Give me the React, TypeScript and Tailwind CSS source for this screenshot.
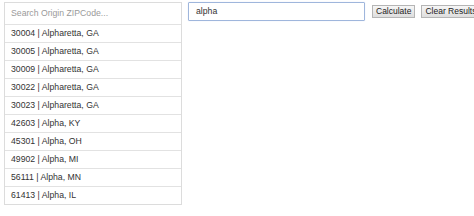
// Zip code lookup panel
// Search list on the left, query input and buttons on the right

const results = [
  '30004 | Alpharetta, GA',
  '30005 | Alpharetta, GA',
  '30009 | Alpharetta, GA',
  '30022 | Alpharetta, GA',
  '30023 | Alpharetta, GA',
  '42603 | Alpha, KY',
  '45301 | Alpha, OH',
  '49902 | Alpha, MI',
  '56111 | Alpha, MN',
  '61413 | Alpha, IL',
]

export default function App() {
  return (
    <div
      className="flex items-start w-[474px] h-[216px] overflow-hidden bg-white pt-[2px] pl-[4px] text-[8.7px] text-[#333]"
      style={{ fontFamily: '"Liberation Sans", Arial, sans-serif' }}
    >
      {/* Origin list */}
      <div className="w-[178px] shrink-0 border border-[#dcdcdc]">
        <div className="h-[21px] flex items-center pl-[6px] text-[#9a9a9a]">
          Search Origin ZIPCode...
        </div>
        {results.map((r) => (
          <div
            key={r}
            className="h-[18px] flex items-center pl-[6px] border-t border-[#e2e2e2]"
          >
            {r}
          </div>
        ))}
      </div>

      {/* Query and actions */}
      <div className="flex items-center ml-[6px] shrink-0">
        <div className="w-[177px] h-[19px] flex items-center pl-[7px] border border-[#9fb6dc] rounded-[1px] shadow-[0_0_1px_#c9d7ef]">
          alpha
        </div>
        <button className="ml-[7px] h-[13px] px-[3px] flex items-center border border-[#b5b5b5] bg-[linear-gradient(#f6f6f6,#dedede)] text-[8.5px] text-[#222] leading-none">
          Calculate
        </button>
        <button className="ml-[6px] h-[13px] px-[3px] flex items-center border border-[#b5b5b5] bg-[linear-gradient(#f6f6f6,#dedede)] text-[8.5px] text-[#222] leading-none whitespace-nowrap">
          Clear Results
        </button>
      </div>
    </div>
  )
}
